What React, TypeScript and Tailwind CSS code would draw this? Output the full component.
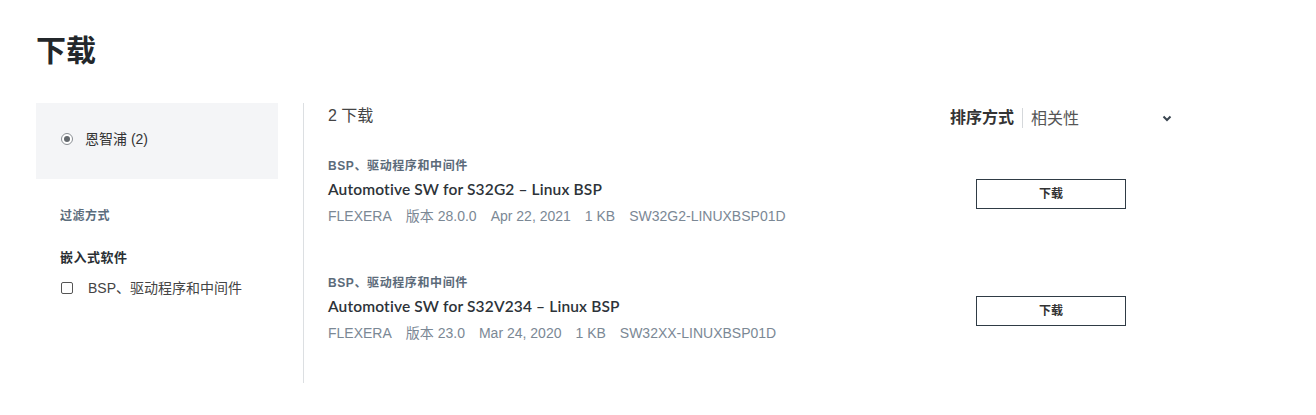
import React from "react";

const items = [
  {
    title: "Automotive SW for S32G2 – Linux BSP",
    version: "版本 28.0.0",
    date: "Apr 22, 2021",
    size: "1 KB",
    code: "SW32G2-LINUXBSP01D",
  },
  {
    title: "Automotive SW for S32V234 – Linux BSP",
    version: "版本 23.0",
    date: "Mar 24, 2020",
    size: "1 KB",
    code: "SW32XX-LINUXBSP01D",
  },
];

export default function App() {
  return (
    <div className="w-[1316px] h-[415px] bg-white pl-[36px] pt-[28px] font-['Liberation_Sans','Noto_Sans_CJK_SC',sans-serif] text-[#333]">
      <h1 className="text-[30px] leading-[46px] font-bold text-[#23272b]">下载</h1>
      <div className="flex mt-[29px]">
        {/* Sidebar */}
        <div className="w-[242px]">
          <div className="h-[76px] bg-[#f4f5f7] pl-[25px] pt-[25px]">
            <div className="flex items-center h-[22px]">
              <span className="w-[12px] h-[12px] rounded-full border-[1.5px] border-[#8a8f94] flex items-center justify-center bg-white">
                <span className="w-[6px] h-[6px] rounded-full bg-[#63686d]" />
              </span>
              <span className="ml-[12px] text-[14px] text-[#333]">恩智浦 (2)</span>
            </div>
          </div>
          <div className="mt-[28px] pl-[24px] text-[12px] leading-[18px] font-bold text-[#5b6c7c] tracking-[0.5px]">过滤方式</div>
          <div className="mt-[24px] pl-[24px] text-[13px] leading-[18px] font-bold text-[#2a2f34] tracking-[0.5px]">嵌入式软件</div>
          <div className="mt-[11px] pl-[25px] flex items-center h-[20px]">
            <span className="w-[12px] h-[12px] rounded-[2px] border border-[#555] bg-white" />
            <span className="ml-[15px] text-[14px] text-[#444]">BSP、驱动程序和中间件</span>
          </div>
        </div>

        {/* Divider */}
        <div className="ml-[25px] w-px h-[280px] bg-[#dcdfe2]" />

        {/* Main */}
        <div className="pl-[24px] w-[872px]">
          <div className="flex items-center justify-between h-[24px] mt-[1px]">
            <div className="text-[16px] text-[#444]">2 下载</div>
            <div className="flex items-center mt-[3px] mr-[4px]">
              <span className="text-[16px] font-bold text-[#333]">排序方式</span>
              <span className="ml-[8px] w-px h-[20px] bg-[#d5d8db]" />
              <div className="ml-[8px] w-[141px] flex items-center justify-between">
                <span className="text-[16px] text-[#555] mt-[2px]">相关性</span>
                <svg width="10" height="8" viewBox="0 0 10 8">
                  <path d="M1.5 2.5 L5 6 L8.5 2.5" fill="none" stroke="#3a4550" strokeWidth="2" />
                </svg>
              </div>
            </div>
          </div>

          {items.map((it, i) => (
            <div key={i} className={`flex items-center ${i === 0 ? "mt-[29px]" : "mt-[48px]"}`}>
              <div className="w-[648px]">
                <div className="text-[12px] leading-[18px] font-bold text-[#5c6b7a] tracking-[0.6px]">
                  BSP、驱动程序和中间件
                </div>
                <div className="mt-[3px] text-[15.5px] leading-[22px] font-['Lato','Noto_Sans_CJK_SC',sans-serif] font-semibold text-[#2d3339] tracking-[0.15px]">
                  {it.title}
                </div>
                <div className="mt-[6px] text-[14px] leading-[20px] text-[#7b8895] flex gap-[14px]">
                  <span>FLEXERA</span>
                  <span>{it.version}</span>
                  <span>{it.date}</span>
                  <span>{it.size}</span>
                  <span>{it.code}</span>
                </div>
              </div>
              <button className="w-[150px] h-[30px] border border-[#2f3b45] bg-white text-[12px] font-bold text-[#333] flex items-center justify-center mt-[4px]">
                下载
              </button>
            </div>
          ))}
        </div>
      </div>
    </div>
  );
}
